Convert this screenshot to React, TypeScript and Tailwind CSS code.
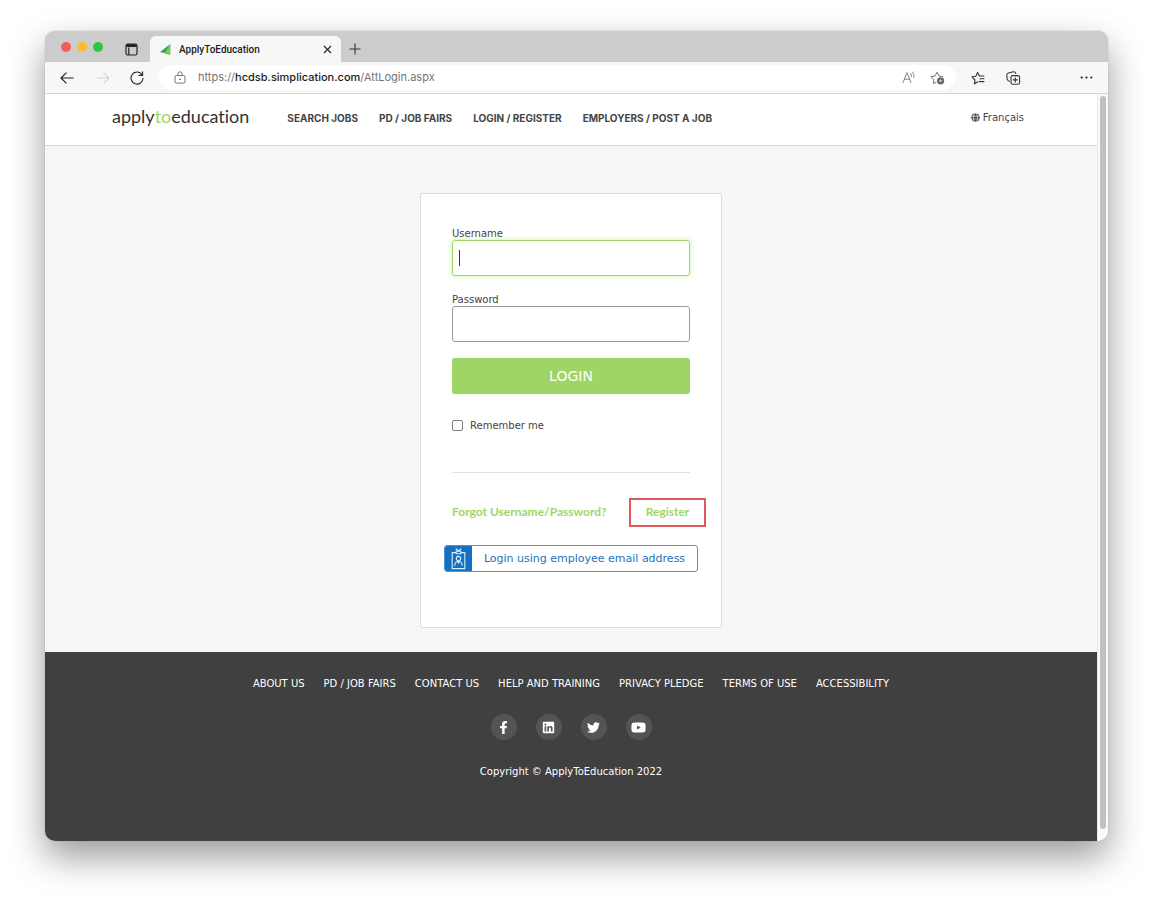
import { FaFacebookF, FaGlobe, FaLinkedin, FaTwitter, FaYoutube } from "react-icons/fa"

const NAV_LINKS = ["SEARCH JOBS", "PD / JOB FAIRS", "LOGIN / REGISTER", "EMPLOYERS / POST A JOB"]

const FOOTER_LINKS = [
  "ABOUT US",
  "PD / JOB FAIRS",
  "CONTACT US",
  "HELP AND TRAINING",
  "PRIVACY PLEDGE",
  "TERMS OF USE",
  "ACCESSIBILITY",
]

const SOCIAL_LINKS = [
  { label: "Facebook", icon: <FaFacebookF size={13} /> },
  { label: "LinkedIn", icon: <FaLinkedin size={13} /> },
  { label: "Twitter", icon: <FaTwitter size={13} /> },
  { label: "YouTube", icon: <FaYoutube size={15} /> },
]

function TabBar() {
  return (
    <div className="flex h-[31px] items-end bg-[#cccccc] pl-4">
      <div className="flex h-[31px] items-center gap-1.5">
        <span className="size-2.5 rounded-full bg-[#f45f57]" />
        <span className="size-2.5 rounded-full bg-[#fbbd2e]" />
        <span className="size-2.5 rounded-full bg-[#28c840]" />
      </div>
      <button aria-label="Tab actions" className="ml-[22px] flex h-[26px] items-center">
        <svg width="13" height="13" viewBox="0 0 13 13" fill="none" stroke="#222" strokeWidth="1.2">
          <rect x="1" y="1.2" width="11" height="10.8" rx="1.8" />
          <path d="M3.8 4.5V12" />
          <path d="M1.5 2.6h10" strokeWidth="2.6" />
        </svg>
      </button>
      <div className="ml-3 flex h-[26px] w-[191px] items-center rounded-t-md bg-[#f7f7f7] pr-[7px] pl-2.5">
        <svg width="11" height="11" viewBox="0 0 11 11">
          <path d="M10.5 0 0 8l6 .4z" fill="#2f9e77" />
          <path d="M10.5 0 5 8.2 10.5 11z" fill="#7ccb4e" />
          <path d="M0 8 6 8l4.5 3z" fill="#57bb6c" />
        </svg>
        <span className="ml-2 font-['Roboto'] text-[10px] font-medium text-[#222]">ApplyToEducation</span>
        <button aria-label="Close tab" className="ml-auto p-0.5">
          <svg width="9" height="9" viewBox="0 0 9 9" stroke="#222" strokeWidth="1.1">
            <path d="M1 1l7 7M8 1L1 8" />
          </svg>
        </button>
      </div>
      <button aria-label="New tab" className="ml-2 flex h-[26px] items-center">
        <svg width="12" height="12" viewBox="0 0 12 12" stroke="#333" strokeWidth="1.1">
          <path d="M6 .5v11M.5 6h11" />
        </svg>
      </button>
    </div>
  )
}

function AddressBar() {
  return (
    <div className="flex h-8 items-center border-b border-[#d4d4d4] bg-[#f7f7f7] pl-[15px] pr-[15px]">
      <button aria-label="Back">
        <svg width="14" height="12" viewBox="0 0 14 12" fill="none" stroke="#222" strokeWidth="1.1" strokeLinecap="round" strokeLinejoin="round">
          <path d="M6.2.8 1 6l5.2 5.2M1 6h12.2" />
        </svg>
      </button>
      <button aria-label="Forward" className="ml-[22px]">
        <svg width="14" height="12" viewBox="0 0 14 12" fill="none" stroke="#d5d5d5" strokeWidth="1.1" strokeLinecap="round" strokeLinejoin="round">
          <path d="M7.8.8 13 6l-5.2 5.2M13 6H.8" />
        </svg>
      </button>
      <button aria-label="Reload" className="ml-5">
        <svg width="14" height="14" viewBox="0 0 14 14" fill="none" stroke="#222" strokeWidth="1.1" strokeLinecap="round" strokeLinejoin="round">
          <path d="M13 7.2A6 6 0 1 1 11.6 3.2L12.4 4.2" />
          <path d="M12.6.8v3.6H9" />
        </svg>
      </button>
      <div className="ml-3.5 flex h-[25px] flex-1 items-center rounded-full bg-white pl-4 pr-[11px]">
        <svg width="12" height="13" viewBox="0 0 12 13" fill="none" stroke="#777" strokeWidth="1">
          <rect x="1" y="4.5" width="10" height="7.6" rx="1.4" />
          <path d="M3.8 4.5V3a2.2 2.2 0 0 1 4.4 0v1.5" />
          <circle cx="6" cy="8.3" r=".5" fill="#777" />
        </svg>
        <span className="ml-3 text-[11px] text-[#757575]">
          https://<span className="font-medium text-[#1c1c1c]">hcdsb.simplication.com</span>/AttLogin.aspx
        </span>
        <button aria-label="Read aloud" className="ml-auto">
          <svg width="14" height="13" viewBox="0 0 14 13" fill="none" stroke="#777" strokeWidth=".9" strokeLinecap="round">
            <path d="M1 11.6 5 1.6l4 10M2.4 8.2h5.2" />
            <path d="M8.6 2.4q1.2 1.4.8 3.2M10.6 1q2 2.4 1.4 5.4" />
          </svg>
        </button>
        <button aria-label="Add to favourites" className="ml-3.5">
          <svg width="15" height="14" viewBox="0 0 15 14" fill="none" stroke="#777" strokeLinejoin="round">
            <path d="M6.4 11.2 3.4 12.6 4 8.8 1 5.6 5 5 7 1.2 9 5l4 .6" />
            <circle cx="10.6" cy="9.8" r="3.6" fill="#666" stroke="none" />
            <path d="M10.6 8.2v3.2M9 9.8h3.2" stroke="#ddd" strokeWidth=".9" />
          </svg>
        </button>
      </div>
      <button aria-label="Favourites" className="ml-[15px]">
        <svg width="14" height="14" viewBox="0 0 14 14" fill="none" stroke="#333" strokeWidth="1.1" strokeLinecap="round" strokeLinejoin="round">
          <path d="M6.8 10.8 3.4 12.8 4 9 1 5.8 4.8 5.2 6.6 1.4 8.4 5H13" />
          <path d="M9 7.8h4M8.4 10.6H13" />
        </svg>
      </button>
      <button aria-label="Collections" className="ml-[21px]">
        <svg width="15" height="14" viewBox="0 0 15 14" fill="none" stroke="#333" strokeWidth="1.1" strokeLinecap="round" strokeLinejoin="round">
          <rect x="5" y="4.6" width="8.6" height="8.6" rx="1.8" />
          <path d="M9.3 6.8v4.2M7.2 8.9h4.2" />
          <path d="M3.4 10.4 2.2 9.6Q1.2 9 1.1 7.8L.8 4.2Q.8 2.4 2.4 2L7.4.8q1.8-.2 2.4 1.6" />
        </svg>
      </button>
      <button aria-label="Settings and more" className="ml-[59px]">
        <svg width="13" height="3" viewBox="0 0 13 3" fill="#222">
          <circle cx="1.7" cy="1.5" r="1.1" />
          <circle cx="6.5" cy="1.5" r="1.1" />
          <circle cx="11.3" cy="1.5" r="1.1" />
        </svg>
      </button>
    </div>
  )
}

function SiteHeader() {
  return (
    <header className="flex h-[52px] items-center border-b border-[#d6d6d6] bg-white pb-2 pl-[67px] pr-[73px]">
      <a href="#" className="font-['Lato'] text-lg text-[#333] [font-variant-ligatures:none]">
        apply<span className="text-[#9fd565]">to</span>education
      </a>
      <nav className="ml-[38px] flex gap-[21px] pt-1.5 text-[10px] font-bold text-[#444]">
        {NAV_LINKS.map((link) => (
          <a key={link} href="#" className="whitespace-nowrap">
            {link}
          </a>
        ))}
      </nav>
      <a href="#" className="ml-auto flex items-center gap-[3px] pt-1 font-['DejaVu_Sans'] text-[10px] text-[#444]">
        <FaGlobe size={9} />
        Français
      </a>
    </header>
  )
}

function LoginCard() {
  return (
    <form className="mx-auto w-[302px] rounded-xs border border-[#dcdcdc] bg-white px-[31px] pt-[34px] pb-[55px] text-[#444]">
      <label htmlFor="username" className="block text-[10px] leading-3">
        Username
      </label>
      <div className="relative">
        <input
          id="username"
          type="text"
          className="block h-9 w-full rounded-[3px] border border-[#9fd565] px-2 text-sm caret-transparent shadow-[0_0_5px_#c5f39a] outline-none"
        />
        {/* text cursor */}
        <span className="absolute top-2.5 left-[7px] h-4 w-px bg-[#333]" />
      </div>

      <label htmlFor="password" className="mt-[18px] block text-[10px] leading-3">
        Password
      </label>
      <input
        id="password"
        type="password"
        className="block h-9 w-full rounded-[3px] border border-[#999] px-2 text-sm outline-none"
      />

      <button type="submit" className="mt-4 block h-9 w-full rounded-[3px] bg-[#9fd565] text-sm text-white">
        LOGIN
      </button>

      <div className="mt-[23px] flex h-4 items-center">
        <input
          id="remember"
          type="checkbox"
          className="size-[11px] appearance-none rounded-xs border border-[#808080] bg-white"
        />
        <label htmlFor="remember" className="ml-[7px] text-[10px]">
          Remember me
        </label>
      </div>

      <hr className="mt-[39px] border-[#e2e2e2]" />

      <div className="mt-[25px] -mr-4 flex items-center justify-between font-['Lato'] text-xs font-bold text-[#9fd565]">
        <a href="#" className="pb-0.5">
          Forgot Username/Password?
        </a>
        <a href="#" className="flex h-[29px] w-[77px] items-center justify-center border-2 border-[#e0585c] pb-0.5">
          Register
        </a>
      </div>

      <button
        type="button"
        className="mt-[18px] -mx-2 flex h-[27px] w-[254px] items-stretch overflow-hidden rounded-[3px] border border-[#4a94d0] bg-white text-[11px] text-[#1a73bd]"
      >
        <span className="flex w-[27px] items-center justify-center bg-[#1570bf]">
          <svg width="15" height="22" viewBox="0 0 15 22" fill="none" stroke="#d9efff" strokeWidth="1.1">
            <path d="M5 4.6H1.2V20.6h12.6V4.6H10" />
            <path d="M4.8.8 7.5 3 10.2.8M5 5.8h5M5.2 3.2h4.6v2.6H5.2z" />
            <circle cx="7.5" cy="10.6" r="2.2" />
            <path d="M3.8 17.8q0-4.4 3.7-4.6 3.7.2 3.7 4.6M6.4 13.4l1.1 1.6 1.1-1.6" />
          </svg>
        </span>
        <span className="flex flex-1 items-center justify-center pt-0.5 whitespace-nowrap">
          Login using employee email address
        </span>
      </button>
    </form>
  )
}

function SiteFooter() {
  return (
    <footer className="flex flex-col items-center bg-[#404040] pt-[25px] pb-[62px] text-[10px] leading-[14px] text-white">
      <nav className="flex flex-wrap justify-center gap-x-[19px]">
        {FOOTER_LINKS.map((link) => (
          <a key={link} href="#" className="whitespace-nowrap">
            {link}
          </a>
        ))}
      </nav>
      <div className="mt-[23px] flex gap-[19px]">
        {SOCIAL_LINKS.map(({ label, icon }) => (
          <a key={label} href="#" aria-label={label} className="flex size-[26px] items-center justify-center rounded-full bg-[#555354]">
            {icon}
          </a>
        ))}
      </div>
      <p className="mt-[25px]">Copyright © ApplyToEducation 2022</p>
    </footer>
  )
}

export default function App() {
  return (
    <div className="min-h-screen bg-white px-[45px] pt-[31px] pb-[59px] font-['Inter',sans-serif]">
      <div className="overflow-hidden rounded-[10px] shadow-[0_0_1px_#777,0_16px_36px_rgba(0,0,0,0.4)]">
        <TabBar />
        <AddressBar />
        <div className="flex bg-[#fafafa]">
          <div className="min-w-0 flex-1">
            <SiteHeader />
            <div className="font-['DejaVu_Sans',sans-serif]">
              <main className="bg-[#f6f6f6] pt-[47px] pb-6">
                <LoginCard />
              </main>
              <SiteFooter />
            </div>
          </div>
          {/* page scrollbar */}
          <div className="flex w-[11px] justify-center border-l border-[#e8e8e8] pt-0.5 pb-3">
            <div className="w-1.5 rounded-full bg-[#c1c1c1]" />
          </div>
        </div>
      </div>
    </div>
  )
}
